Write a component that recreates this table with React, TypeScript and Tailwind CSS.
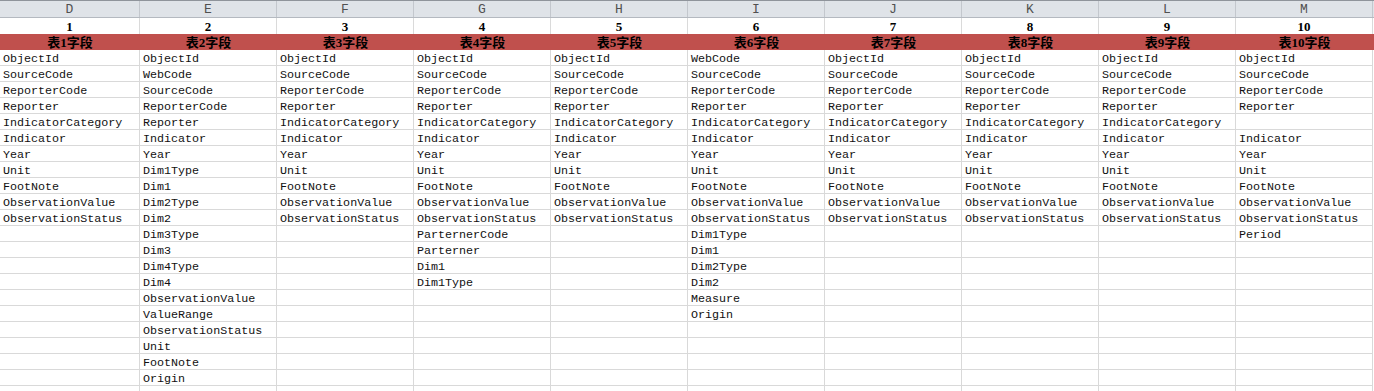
const letters = ['D', 'E', 'F', 'G', 'H', 'I', 'J', 'K', 'L', 'M'];

const base = ['ObjectId', 'SourceCode', 'ReporterCode', 'Reporter', 'IndicatorCategory', 'Indicator', 'Year', 'Unit', 'FootNote', 'ObservationValue', 'ObservationStatus'];

const columns: string[][] = [
    base,
    ['ObjectId', 'WebCode', 'SourceCode', 'ReporterCode', 'Reporter', 'Indicator', 'Year', 'Dim1Type', 'Dim1', 'Dim2Type', 'Dim2', 'Dim3Type', 'Dim3', 'Dim4Type', 'Dim4', 'ObservationValue', 'ValueRange', 'ObservationStatus', 'Unit', 'FootNote', 'Origin'],
    base,
    [...base, 'ParternerCode', 'Parterner', 'Dim1', 'Dim1Type'],
    base,
    ['WebCode', 'SourceCode', 'ReporterCode', 'Reporter', 'IndicatorCategory', 'Indicator', 'Year', 'Unit', 'FootNote', 'ObservationValue', 'ObservationStatus', 'Dim1Type', 'Dim1', 'Dim2Type', 'Dim2', 'Measure', 'Origin'],
    base,
    base,
    base,
    ['ObjectId', 'SourceCode', 'ReporterCode', 'Reporter', '', 'Indicator', 'Year', 'Unit', 'FootNote', 'ObservationValue', 'ObservationStatus', 'Period'],
];

const ROWS = 22;
const grid = 'grid grid-cols-[140px_repeat(9,137px)]';

export default function App() {
    return (
        <div className="h-[391px] w-[1374px] overflow-hidden bg-white">
            {/* Column letters */}
            <div className={`${grid} h-[18px] border-t border-b border-t-[#8f949b] border-b-[#b4b9c0] bg-[#dfe3e8]`}>
                {letters.map((l) => (
                    <div key={l} className="flex items-center justify-center border-r border-[#c3c7cd] text-[13px] leading-none text-[#505050] [font-family:'Liberation_Mono',monospace]">
                        {l}
                    </div>
                ))}
            </div>

            {/* Table numbers */}
            <div className={`${grid} h-[16px]`}>
                {letters.map((_, i) => (
                    <div key={i} className="flex items-center justify-center border-r border-[#dadada] text-[13px] font-bold leading-none text-black [font-family:'Liberation_Serif','Noto_Sans_CJK_SC',serif]">
                        {i + 1}
                    </div>
                ))}
            </div>

            {/* Red title band */}
            <div className={`${grid} h-[16px] bg-[#c0504d]`}>
                {letters.map((_, i) => (
                    <div key={i} className="flex items-center justify-center text-[13px] font-bold leading-none text-black [font-family:'Liberation_Serif','Noto_Sans_CJK_SC',serif]">
                        表{i + 1}字段
                    </div>
                ))}
            </div>

            {/* Field rows */}
            {Array.from({ length: ROWS }).map((_, r) => (
                <div key={r} className={`${grid} h-[16px]`}>
                    {columns.map((col, c) => (
                        <div key={c} className="overflow-hidden border-r border-b border-[#d9d9d9] pt-[3px] pl-[3px] text-[11.7px] leading-[12px] whitespace-nowrap text-[#111] [font-family:'Liberation_Mono',monospace]">
                            {col[r] ?? ''}
                        </div>
                    ))}
                </div>
            ))}
        </div>
    );
}
